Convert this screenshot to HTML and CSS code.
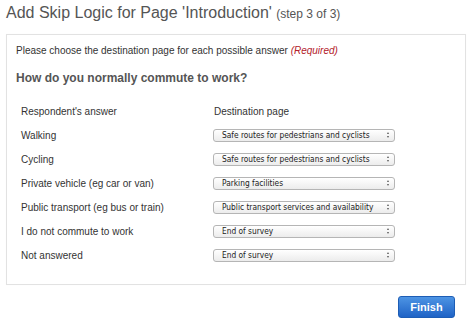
FILE: index.html
```html
<!DOCTYPE html>
<html lang="en">
<head>
  <meta charset="UTF-8" />
  <title>Add Skip Logic</title>
  <link rel="stylesheet" href="styles.css">
</head>
<body>
  <h1 class="title">Add Skip Logic for Page 'Introduction' <span class="step">(step 3 of 3)</span></h1>

  <div class="panel">
    <p class="intro">Please choose the destination page for each possible answer <em class="required">(Required)</em></p>
    <h2 class="question">How do you normally commute to work?</h2>

    <div class="logic">
      <div class="row head">
        <div class="answer">Respondent's answer</div>
        <div class="dest">Destination page</div>
      </div>
      <div class="row">
        <div class="answer">Walking</div>
        <div class="select">Safe routes for pedestrians and cyclists<span class="arrows"></span></div>
      </div>
      <div class="row">
        <div class="answer">Cycling</div>
        <div class="select">Safe routes for pedestrians and cyclists<span class="arrows"></span></div>
      </div>
      <div class="row">
        <div class="answer">Private vehicle (eg car or van)</div>
        <div class="select">Parking facilities<span class="arrows"></span></div>
      </div>
      <div class="row">
        <div class="answer">Public transport (eg bus or train)</div>
        <div class="select">Public transport services and availability<span class="arrows"></span></div>
      </div>
      <div class="row">
        <div class="answer">I do not commute to work</div>
        <div class="select">End of survey<span class="arrows"></span></div>
      </div>
      <div class="row">
        <div class="answer">Not answered</div>
        <div class="select">End of survey<span class="arrows"></span></div>
      </div>
    </div>
  </div>

  <div class="actions">
    <button class="finish">Finish</button>
  </div>
</body>
</html>
```

FILE: styles.css
```css
body {
  margin: 0;
  padding: 0 8px 0 6px;
  font-family: 'Liberation Sans', Arial, sans-serif;
  background-color: #fff;
  color: #333;
}

.title {
  margin: 3px 0 10px;
  font-size: 16px;
  line-height: 20px;
  font-weight: normal;
  color: #555;
  white-space: nowrap;
}

.step {
  font-size: 12px;
}

.panel {
  border: 1px solid #e2e2e2;
  padding: 9px 9px 17px;
  box-shadow: 0 0 1px rgba(0, 0, 0, 0.04);
}

.intro {
  margin: 0;
  font-size: 10px;
  line-height: 14px;
  color: #333;
}

.required {
  color: #b3202a;
}

.question {
  margin: 12px 0 13px;
  font-size: 12px;
  line-height: 16px;
  color: #555;
}

.row {
  display: grid;
  grid-template-columns: 192px 182px;
  align-items: center;
  height: 24px;
  padding-left: 5px;
  font-size: 10px;
  color: #333;
}

.dest {
  padding-left: 1px;
}

.select {
  position: relative;
  box-sizing: border-box;
  height: 13px;
  padding: 0 14px 0 8px;
  border: 1px solid #b5b5b5;
  border-radius: 3px;
  background: linear-gradient(#fff, #ececec);
  font-family: 'DejaVu Sans Condensed', 'DejaVu Sans', sans-serif;
  font-size: 8.3px;
  line-height: 11px;
  color: #222;
  white-space: nowrap;
  overflow: hidden;
}

.arrows {
  position: absolute;
  right: 6px;
  top: 2px;
  width: 0;
  height: 0;
}

.arrows::before,
.arrows::after {
  content: '';
  position: absolute;
  left: -1.5px;
  border-left: 1.5px solid transparent;
  border-right: 1.5px solid transparent;
}

.arrows::before {
  top: 0;
  border-bottom: 2.5px solid #555;
}

.arrows::after {
  top: 4px;
  border-top: 2.5px solid #555;
}

.actions {
  display: flex;
  justify-content: flex-end;
  padding: 11px 11px 0 0;
}

.finish {
  width: 57px;
  height: 22px;
  border: 1px solid #1d5db5;
  border-radius: 3px;
  background: linear-gradient(#4d94e4, #1f63c6);
  color: #fff;
  font-family: 'Liberation Sans', Arial, sans-serif;
  font-size: 11px;
  font-weight: bold;
  padding: 0;
}
```
